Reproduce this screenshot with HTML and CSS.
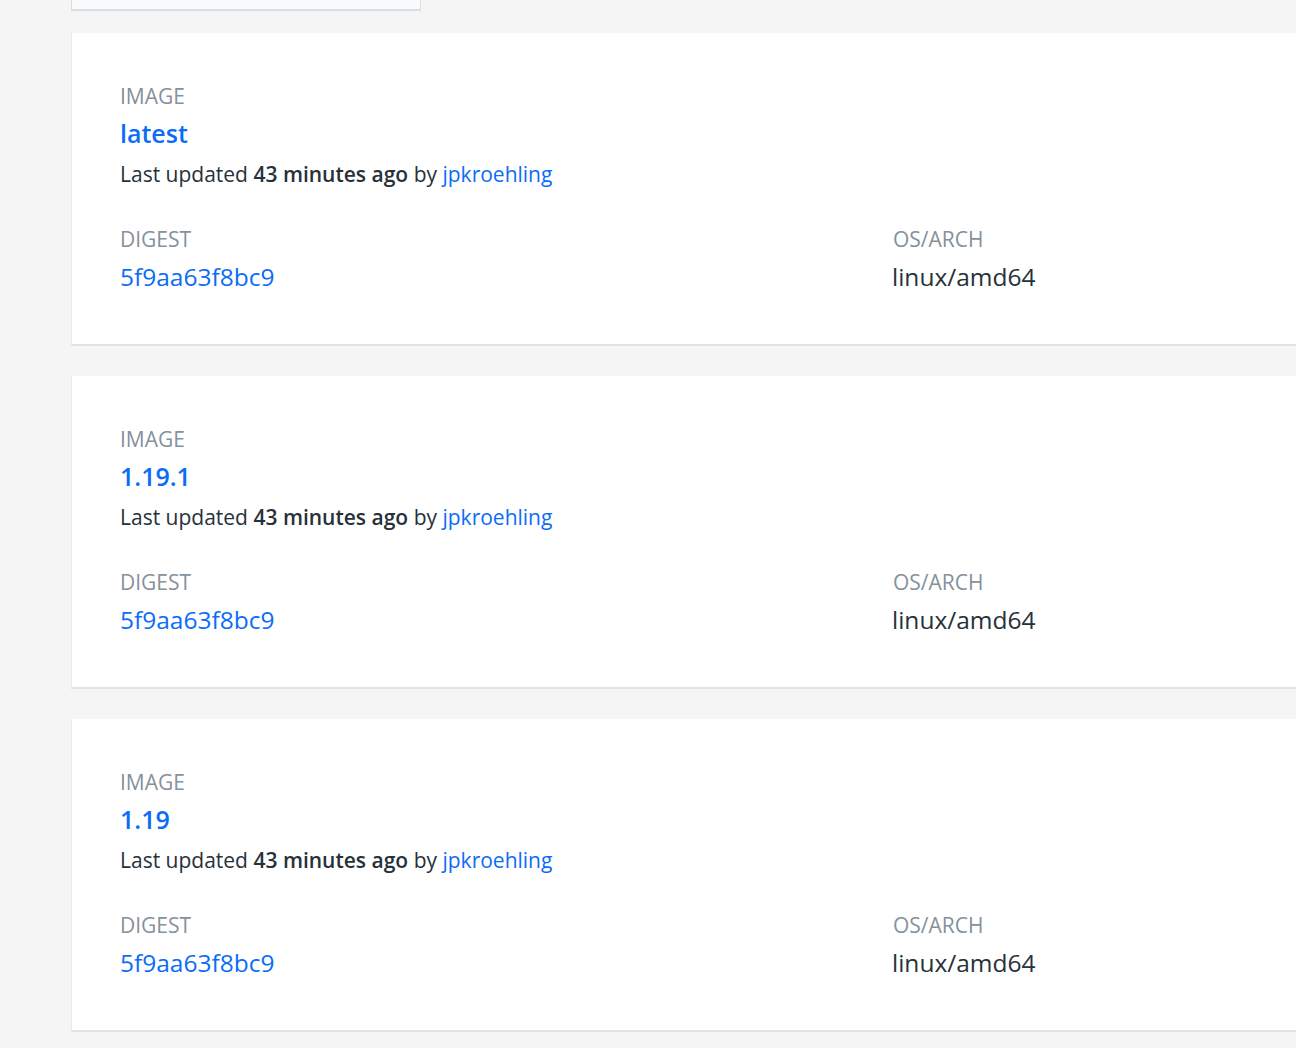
FILE: index.html
```html
<!DOCTYPE html>
<html>
<head>
<meta charset="utf-8">
<link rel="stylesheet" href="styles.css">
</head>
<body>
<div class="page">
  <div class="topbox"></div>
  <div class="card">
    <div class="label">IMAGE</div>
    <div class="name"><a href="#">latest</a></div>
    <div class="meta">Last updated <b>43 minutes ago</b> by <a href="#">jpkroehling</a></div>
    <div class="grid">
      <div>
        <div class="label">DIGEST</div>
        <div class="value link">5f9aa63f8bc9</div>
      </div>
      <div class="col2">
        <div class="label">OS/ARCH</div>
        <div class="value">linux/amd64</div>
      </div>
    </div>
  </div>
  <div class="card">
    <div class="label">IMAGE</div>
    <div class="name"><a href="#">1.19.1</a></div>
    <div class="meta">Last updated <b>43 minutes ago</b> by <a href="#">jpkroehling</a></div>
    <div class="grid">
      <div>
        <div class="label">DIGEST</div>
        <div class="value link">5f9aa63f8bc9</div>
      </div>
      <div class="col2">
        <div class="label">OS/ARCH</div>
        <div class="value">linux/amd64</div>
      </div>
    </div>
  </div>
  <div class="card">
    <div class="label">IMAGE</div>
    <div class="name"><a href="#">1.19</a></div>
    <div class="meta">Last updated <b>43 minutes ago</b> by <a href="#">jpkroehling</a></div>
    <div class="grid">
      <div>
        <div class="label">DIGEST</div>
        <div class="value link">5f9aa63f8bc9</div>
      </div>
      <div class="col2">
        <div class="label">OS/ARCH</div>
        <div class="value">linux/amd64</div>
      </div>
    </div>
  </div>
</div>
</body>
</html>
```
FILE: styles.css
```css
html, body {
  margin: 0;
  padding: 0;
  background: #f5f5f5;
  overflow: hidden;
}
body {
  font-family: "Open Sans", Lato, sans-serif;
  color: #27313a;
}
.page {
  margin-left: 71px;
  margin-right: -120px;
  display: flex;
  flex-direction: column;
  gap: 30px;
  padding-bottom: 40px;
}
.topbox {
  width: 348px;
  height: 9px;
  background: #f9fafb;
  border: 1px solid #d9dee1;
  border-top: none;
  border-bottom-width: 2px;
  margin-bottom: -8px;
}
.card {
  background: #fff;
  border-left: 1px solid #e8e9ea;
  border-bottom: 2px solid #dfe3e7;
  padding: 51px 48px 51px 48px;
}
a {
  color: #0b6cf7;
  text-decoration: none;
}
.label {
  font-size: 21px;
  line-height: 24px;
  color: #85919b;
}
.name {
  margin-top: 8px;
  font-size: 25px;
  line-height: 34px;
  font-weight: 600;
}
.meta {
  margin-top: 10px;
  font-size: 21px;
  line-height: 28px;
}
.meta b {
  font-weight: 600;
}
.grid {
  margin-top: 39px;
  display: grid;
  grid-template-columns: 772px 1fr;
}
.col2 .label {
  padding-left: 1px;
}
.value {
  margin-top: 10px;
  font-size: 24.5px;
  line-height: 32px;
}
.value.link {
  color: #0b6cf7;
}
```
